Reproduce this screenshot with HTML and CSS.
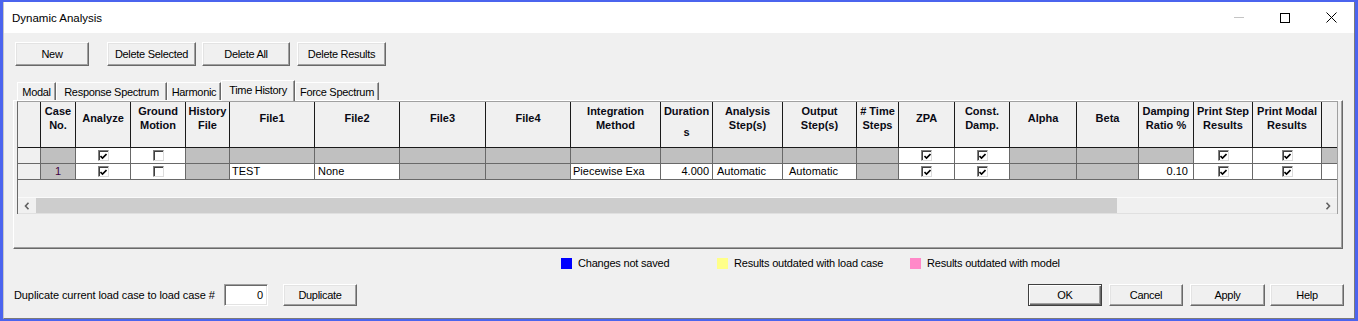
FILE: index.html
```html
<!DOCTYPE html>
<html>
<head>
<meta charset="utf-8">
<link rel="stylesheet" href="styles.css">
</head>
<body>
<div class="window">
  <div class="titlebar">
    <span class="title">Dynamic Analysis</span>
    <div class="controls">
      <span class="ctl"><svg width="10" height="1" viewBox="0 0 10 1"><rect width="10" height="1" fill="#c4c4c4"/></svg></span>
      <span class="ctl"><svg width="10" height="10" viewBox="0 0 10 10"><rect x="0.5" y="0.5" width="9" height="9" fill="none" stroke="#000"/></svg></span>
      <span class="ctl"><svg width="11" height="11" viewBox="0 0 11 11"><path d="M0.5 0.5L10.5 10.5M10.5 0.5L0.5 10.5" stroke="#000" stroke-width="1"/></svg></span>
    </div>
  </div>
  <div class="content">
    <div class="toolbar">
      <div class="btn b-new">New</div>
      <div class="btn b-dsel">Delete Selected</div>
      <div class="btn b-dall">Delete All</div>
      <div class="btn b-dres">Delete Results</div>
    </div>
    <div class="tabs">
      <div class="tab t1">Modal</div>
      <div class="tab t2">Response Spectrum</div>
      <div class="tab t3">Harmonic</div>
      <div class="tab t4 sel">Time History</div>
      <div class="tab t5">Force Spectrum</div>
    </div>
    <div class="panel">
      <div class="grid">
        <div class="cols">
          <div class="h"></div>
          <div class="h"><div class="t">Case<br>No.</div></div>
          <div class="h"><div class="t">Analyze</div></div>
          <div class="h"><div class="t">Ground<br>Motion</div></div>
          <div class="h"><div class="t">History<br>File</div></div>
          <div class="h"><div class="t">File1</div></div>
          <div class="h"><div class="t">File2</div></div>
          <div class="h"><div class="t">File3</div></div>
          <div class="h"><div class="t">File4</div></div>
          <div class="h"><div class="t">Integration<br>Method</div></div>
          <div class="h"><div class="dur">Duration</div><div class="dur2">s</div></div>
          <div class="h"><div class="t">Analysis<br>Step(s)</div></div>
          <div class="h"><div class="t">Output<br>Step(s)</div></div>
          <div class="h"><div class="t"># Time<br>Steps</div></div>
          <div class="h"><div class="t">ZPA</div></div>
          <div class="h"><div class="t">Const.<br>Damp.</div></div>
          <div class="h"><div class="t">Alpha</div></div>
          <div class="h"><div class="t">Beta</div></div>
          <div class="h"><div class="t">Damping<br>Ratio %</div></div>
          <div class="h"><div class="t">Print Step<br>Results</div></div>
          <div class="h"><div class="t">Print Modal<br>Results</div></div>
          <div class="h fill"></div>

          <div class="c rh"></div>
          <div class="c g"></div>
          <div class="c w ck"><span class="cb"><svg width="7" height="7" viewBox="0 0 7 7"><path d="M0.5 3L2.5 5L6.5 1" fill="none" stroke="#000" stroke-width="1.6"/></svg></span></div>
          <div class="c w ck"><span class="cb"></span></div>
          <div class="c g"></div>
          <div class="c g"></div>
          <div class="c g"></div>
          <div class="c g"></div>
          <div class="c g"></div>
          <div class="c g"></div>
          <div class="c g"></div>
          <div class="c g"></div>
          <div class="c g"></div>
          <div class="c g"></div>
          <div class="c w ck"><span class="cb"><svg width="7" height="7" viewBox="0 0 7 7"><path d="M0.5 3L2.5 5L6.5 1" fill="none" stroke="#000" stroke-width="1.6"/></svg></span></div>
          <div class="c w ck"><span class="cb"><svg width="7" height="7" viewBox="0 0 7 7"><path d="M0.5 3L2.5 5L6.5 1" fill="none" stroke="#000" stroke-width="1.6"/></svg></span></div>
          <div class="c g"></div>
          <div class="c g"></div>
          <div class="c g"></div>
          <div class="c w ck"><span class="cb"><svg width="7" height="7" viewBox="0 0 7 7"><path d="M0.5 3L2.5 5L6.5 1" fill="none" stroke="#000" stroke-width="1.6"/></svg></span></div>
          <div class="c w ck"><span class="cb"><svg width="7" height="7" viewBox="0 0 7 7"><path d="M0.5 3L2.5 5L6.5 1" fill="none" stroke="#000" stroke-width="1.6"/></svg></span></div>
          <div class="c g fillc"></div>

          <div class="c rh"></div>
          <div class="c g num">1</div>
          <div class="c w ck"><span class="cb"><svg width="7" height="7" viewBox="0 0 7 7"><path d="M0.5 3L2.5 5L6.5 1" fill="none" stroke="#000" stroke-width="1.6"/></svg></span></div>
          <div class="c w ck"><span class="cb"></span></div>
          <div class="c g"></div>
          <div class="c w">TEST</div>
          <div class="c w p3">None</div>
          <div class="c g"></div>
          <div class="c g"></div>
          <div class="c w">Piecewise Exa</div>
          <div class="c w r">4.000</div>
          <div class="c w p5">Automatic</div>
          <div class="c w p6">Automatic</div>
          <div class="c g"></div>
          <div class="c w ck"><span class="cb"><svg width="7" height="7" viewBox="0 0 7 7"><path d="M0.5 3L2.5 5L6.5 1" fill="none" stroke="#000" stroke-width="1.6"/></svg></span></div>
          <div class="c w ck"><span class="cb"><svg width="7" height="7" viewBox="0 0 7 7"><path d="M0.5 3L2.5 5L6.5 1" fill="none" stroke="#000" stroke-width="1.6"/></svg></span></div>
          <div class="c g"></div>
          <div class="c g"></div>
          <div class="c w r r5">0.10</div>
          <div class="c w ck"><span class="cb"><svg width="7" height="7" viewBox="0 0 7 7"><path d="M0.5 3L2.5 5L6.5 1" fill="none" stroke="#000" stroke-width="1.6"/></svg></span></div>
          <div class="c w ck"><span class="cb"><svg width="7" height="7" viewBox="0 0 7 7"><path d="M0.5 3L2.5 5L6.5 1" fill="none" stroke="#000" stroke-width="1.6"/></svg></span></div>
          <div class="c w fillc"></div>
        </div>
        <div class="empty"></div>
        <div class="scroll">
          <div class="arrow"><svg width="6" height="8" viewBox="0 0 6 8"><path d="M4.5 0.8L1.5 4L4.5 7.2" fill="none" stroke="#606060" stroke-width="1.6"/></svg></div>
          <div class="thumb"></div>
          <div class="track"></div>
          <div class="arrow"><svg width="6" height="8" viewBox="0 0 6 8"><path d="M1.5 0.8L4.5 4L1.5 7.2" fill="none" stroke="#606060" stroke-width="1.6"/></svg></div>
        </div>
      </div>
    </div>
    <div class="legend">
      <div class="li li1"><span class="sq blue"></span>Changes not saved</div>
      <div class="li li2"><span class="sq yellow"></span>Results outdated with load case</div>
      <div class="li"><span class="sq pink"></span>Results outdated with model</div>
    </div>
    <div class="bottom">
      <div class="dlabel">Duplicate current load case to load case #</div>
      <div class="input">0</div>
      <div class="btn b-dup">Duplicate</div>
      <div class="spacer"></div>
      <div class="btn b-ok def">OK</div>
      <div class="btn b-cancel">Cancel</div>
      <div class="btn b-apply">Apply</div>
      <div class="btn b-help">Help</div>
    </div>
  </div>
</div>
</body>
</html>
```
FILE: styles.css
```css
html, body {
  margin: 0;
  padding: 0;
}
body {
  background: #4b64ee;
  width: 1358px;
  height: 321px;
  overflow: hidden;
  font-family: "Liberation Sans", Arial, sans-serif;
  font-size: 11px;
  color: #000;
}
.window {
  margin: 2px 0 0 3px;
  width: 1352px;
  height: 317px;
  box-sizing: border-box;
  background: #f0f0f0;
  border-right: 1px solid #7a7a7a;
  border-bottom: 1px solid #7a7a7a;
  border-left: 1px solid #c8c8c8;
  display: flex;
  flex-direction: column;
}
.titlebar {
  height: 31px;
  background: #fff;
  display: flex;
  align-items: center;
  flex: none;
}
.title {
  font-size: 11.5px;
  margin-left: 8px;
  margin-top: 1px;
  color: #000;
}
.controls {
  margin-left: auto;
  display: flex;
  height: 31px;
}
.ctl {
  width: 46px;
  height: 31px;
  display: flex;
  align-items: center;
  justify-content: center;
}
.ctl svg { display: block; }
.content {
  flex: 1;
  display: flex;
  flex-direction: column;
}
.btn {
  height: 24px;
  box-sizing: border-box;
  border: 1px solid;
  border-color: #fff #696969 #696969 #fff;
  box-shadow: inset -1px -1px 0 #a0a0a0, inset 1px 1px 0 #e3e3e3;
  background: #f0f0f0;
  display: flex;
  align-items: center;
  justify-content: center;
  letter-spacing: -0.3px;
  flex: none;
}
.btn.def {
  border-color: #404040;
  box-shadow: inset 1px 1px 0 #fff, inset -1px -1px 0 #696969, inset -2px -2px 0 #a0a0a0;
}
.toolbar {
  display: flex;
  margin-top: 9px;
  padding-left: 11px;
}
.b-new { width: 74px; }
.b-dsel { width: 89px; margin-left: 18px; }
.b-dall { width: 88px; margin-left: 6px; }
.b-dres { width: 89px; margin-left: 7px; }
.tabs {
  display: flex;
  align-items: flex-end;
  margin-top: 14px;
  height: 20px;
  padding-left: 13px;
  letter-spacing: -0.3px;
}
.tab {
  height: 18px;
  box-sizing: border-box;
  border-top: 1px solid #fff;
  border-left: 1px solid #fff;
  border-right: 1px solid #696969;
  box-shadow: inset -1px 0 0 #a0a0a0;
  background: #f0f0f0;
  display: flex;
  align-items: center;
  justify-content: center;
  padding-top: 1px;
}
.tab.sel {
  height: 21px;
  margin-bottom: -1px;
  position: relative;
  z-index: 1;
  padding-top: 0;
  padding-bottom: 2px;
}
.t1 { width: 39px; }
.t2 { width: 111px; }
.t3 { width: 54px; }
.t4 { width: 74px; }
.t5 { width: 84px; }
.panel {
  margin-left: 9px;
  width: 1330px;
  height: 149px;
  box-sizing: border-box;
  border-top: 1px solid #fff;
  border-left: 1px solid #fff;
  border-right: 1px solid #696969;
  border-bottom: 1px solid #696969;
  box-shadow: inset -1px -1px 0 #a0a0a0;
  padding-left: 3px;
}
.grid {
  width: 1321px;
  box-sizing: border-box;
  border-left: 1px solid #696969;
  border-top: 1px solid #a0a0a0;
  border-right: 1px solid #a0a0a0;
  background: #f0f0f0;
}
.cols {
  display: grid;
  grid-template-columns: 23px 35px 55px 55px 44px 85px 85px 86px 85px 90px 52px 70px 74px 42px 56px 55px 67px 62px 55px 59px 69px 15px;
  grid-auto-rows: auto;
}
.h {
  height: 46px;
  box-sizing: border-box;
  background: #f0f0f0;
  border-right: 1px solid #1a1a1a;
  border-bottom: 1px solid #1a1a1a;
  font-weight: bold;
  text-align: center;
  line-height: 14px;
  padding-top: 2px;
  white-space: nowrap;
  color: #0a0a14;
}
.h.fill { border-right: none; }
.h .t {
  height: 28px;
  display: flex;
  align-items: center;
  justify-content: center;
}
.dur { line-height: 14px; }
.dur2 { margin-top: 7px; line-height: 14px; }
.c {
  height: 16px;
  box-sizing: border-box;
  border-right: 1px solid #696969;
  border-bottom: 1px solid #696969;
  line-height: 15px;
  white-space: nowrap;
  overflow: hidden;
  padding: 0 2px;
}
.c.fillc { border-right: none; }
.rh { background: #f0f0f0; }
.g { background: #c0c0c0; }
.w { background: #fff; }
.r { text-align: right; padding-right: 3px; }
.r5 { padding-right: 5px; }
.p3 { padding-left: 3px; }
.p5 { padding-left: 4px; }
.p6 { padding-left: 6px; }
.num { text-align: center; color: #400040; }
.ck {
  display: flex;
  align-items: center;
  justify-content: center;
  padding: 0;
}
.cb {
  width: 11px;
  height: 11px;
  box-sizing: border-box;
  background: #fff;
  border-top: 1px solid #808080;
  border-left: 1px solid #808080;
  border-right: 1px solid #dcdcdc;
  border-bottom: 1px solid #dcdcdc;
  box-shadow: inset 1px 1px 0 #404040;
  display: flex;
  align-items: center;
  justify-content: center;
  padding: 1px 0 0 1px;
}
.cb svg { display: block; }
.empty { height: 17px; }
.scroll {
  height: 17px;
  box-sizing: border-box;
  border-top: 1px solid #fafafa;
  border-bottom: 1px solid #e0e0e0;
  display: flex;
  background: #f0f0f0;
}
.arrow {
  width: 18px;
  display: flex;
  align-items: center;
  justify-content: center;
}
.arrow svg { display: block; }
.thumb {
  width: 1081px;
  background: #cdcdcd;
}
.track { flex: 1; }
.legend {
  display: flex;
  margin-top: 9px;
  padding-left: 557px;
  height: 11px;
  align-items: center;
  letter-spacing: -0.2px;
}
.li {
  display: flex;
  align-items: center;
  height: 11px;
  line-height: 11px;
}
.li1 { width: 156px; }
.li2 { width: 193px; }
.sq {
  width: 11px;
  height: 11px;
  margin-right: 6px;
  flex: none;
}
.blue { background: #0000ff; }
.yellow { background: #ffff88; }
.pink { background: #ff88c8; }
.bottom {
  display: flex;
  align-items: center;
  margin-top: 15px;
  height: 22px;
  padding-left: 10px;
  padding-right: 10px;
}
.bottom .btn { height: 22px; }
.dlabel {
  width: 210px;
  letter-spacing: -0.1px;
  flex: none;
}
.input {
  width: 44px;
  height: 22px;
  box-sizing: border-box;
  background: #fff;
  border-top: 1px solid #a0a0a0;
  border-left: 1px solid #a0a0a0;
  border-right: 1px solid #fff;
  border-bottom: 1px solid #fff;
  box-shadow: inset 1px 1px 0 #696969, inset -1px -1px 0 #e3e3e3;
  text-align: right;
  padding-right: 4px;
  line-height: 20px;
  flex: none;
}
.b-dup { width: 74px; margin-left: 15px; }
.spacer { flex: 1; }
.b-ok { width: 74px; }
.b-cancel { width: 74px; margin-left: 7px; }
.b-apply { width: 75px; margin-left: 7px; }
.b-help { width: 74px; margin-left: 5px; }
```
